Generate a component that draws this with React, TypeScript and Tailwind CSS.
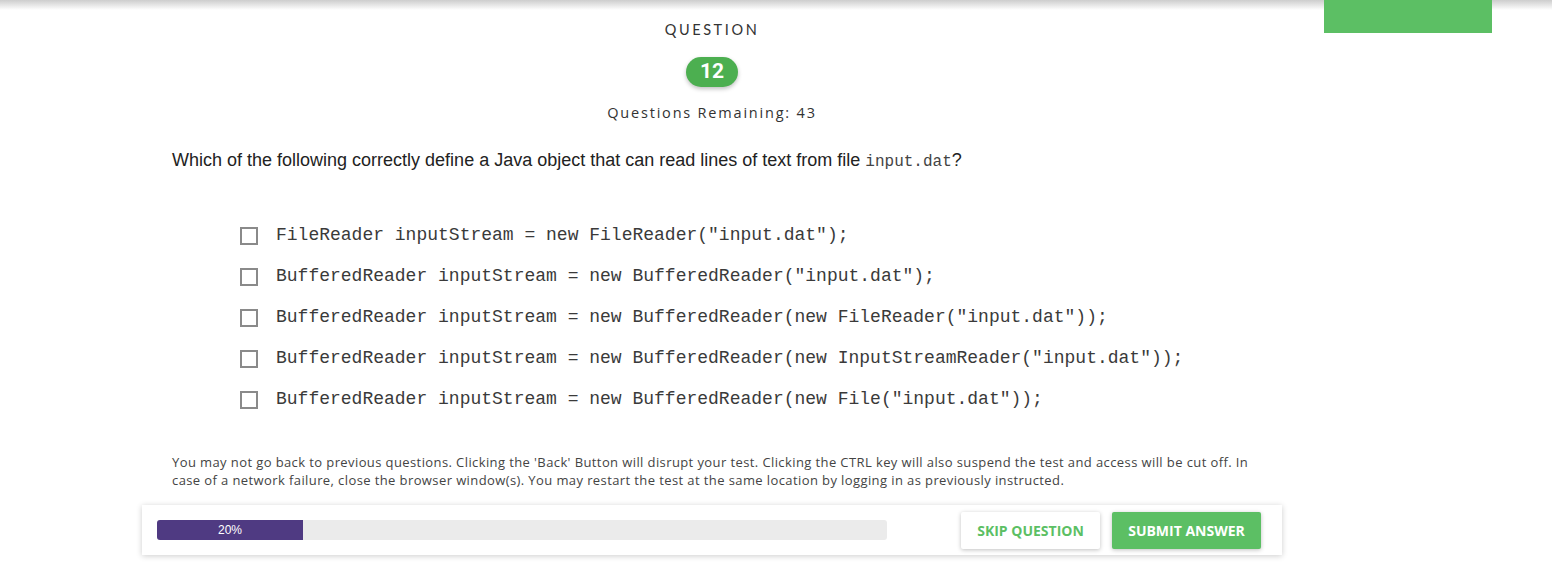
import React from "react";

const options = [
  'FileReader inputStream = new FileReader("input.dat");',
  'BufferedReader inputStream = new BufferedReader("input.dat");',
  'BufferedReader inputStream = new BufferedReader(new FileReader("input.dat"));',
  'BufferedReader inputStream = new BufferedReader(new InputStreamReader("input.dat"));',
  'BufferedReader inputStream = new BufferedReader(new File("input.dat"));',
];

export default function App() {
  return (
    <div className="relative min-h-[586px] w-[1552px] bg-white overflow-hidden">
      <div className="pointer-events-none absolute inset-x-0 top-0 h-[10px] bg-gradient-to-b from-[#cdcdcd] to-white" />
      <div className="absolute top-0 left-[1324px] h-[33px] w-[168px] bg-[#5cbf64]" />

      <div className="ml-[142px] w-[1140px] flex flex-col">
        <div className="pt-[20px] text-center text-[14.5px] leading-[20px] tracking-[2.6px] text-[#333] font-['Lato',sans-serif]">
          QUESTION
        </div>
        <div className="mt-[17px] flex justify-center">
          <div className="flex h-[30px] w-[52px] items-center justify-center rounded-full bg-[#4caf50] text-[21px] font-bold text-white shadow-[0_2px_4px_rgba(0,0,0,0.25)] font-['Roboto',sans-serif]">
            12
          </div>
        </div>
        <div className="mt-[16px] text-center text-[14.5px] leading-[20px] tracking-[1.8px] text-[#333] font-['Open_Sans',sans-serif]">
          Questions Remaining: 43
        </div>

        <div className="mt-[25px] px-[30px] text-[18px] leading-[24px] text-[#222] font-['Liberation_Sans',Arial,sans-serif]">
          Which of the following correctly define a Java object that can read lines of text from file{" "}
          <span className="font-['Liberation_Mono',monospace] text-[16px] text-[#444]">input.dat</span>?
        </div>

        <div className="mt-[41px] ml-[98px] flex flex-col">
          {options.map((o) => (
            <div key={o} className="flex h-[41px] items-center gap-[18px]">
              <div className="h-[18px] w-[18px] border-2 border-[#8a8a8a] bg-white" />
              <span className="whitespace-pre text-[18px] text-[#3a3a3a] font-['Liberation_Mono','Courier_New',monospace]">
                {o}
              </span>
            </div>
          ))}
        </div>

        <p className="mt-[33px] pl-[30px] pr-[20px] text-[13px] leading-[18px] tracking-[0.4px] text-[#444] font-['Open_Sans',sans-serif]">
          You may not go back to previous questions. Clicking the 'Back' Button will disrupt your test. Clicking the CTRL key will also suspend the test and access will be cut off. In case of a network failure, close the browser window(s). You may restart the test at the same location by logging in as previously instructed.
        </p>

        <div className="mt-[16px] flex h-[50px] items-center bg-white pl-[15px] pr-[21px] shadow-[0_1px_6px_rgba(0,0,0,0.2)]">
          <div className="flex h-[20px] w-[730px] overflow-hidden rounded-[3px] bg-[#ebebeb]">
            <div className="flex h-full w-[146px] items-center justify-center bg-[#4f3a82] text-[12px] text-white font-['Liberation_Sans',Arial,sans-serif]">
              20%
            </div>
          </div>
          <div className="ml-auto flex items-center gap-[12px]">
            <button className="flex h-[37px] w-[139px] items-center justify-center rounded-[2px] bg-white text-[14px] font-bold text-[#5cbf64] shadow-[0_1px_4px_rgba(0,0,0,0.25)] font-['Open_Sans',sans-serif]">
              SKIP QUESTION
            </button>
            <button className="flex h-[37px] w-[149px] items-center justify-center rounded-[2px] bg-[#5cbf64] text-[14px] font-bold text-white shadow-[0_1px_4px_rgba(0,0,0,0.25)] font-['Open_Sans',sans-serif]">
              SUBMIT ANSWER
            </button>
          </div>
        </div>
      </div>
    </div>
  );
}
